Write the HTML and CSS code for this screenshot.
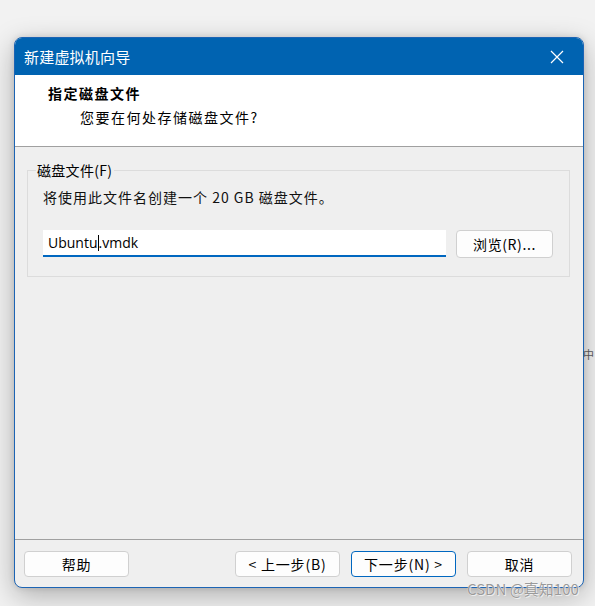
FILE: index.html
```html
<!DOCTYPE html>
<html>
<head>
<meta charset="utf-8">
<link rel="stylesheet" href="styles.css">
</head>
<body>
<div class="window">
  <div class="titlebar">
    <span class="title">新建虚拟机向导</span>
    <svg class="close" width="14" height="14" viewBox="0 0 14 14"><path d="M1 1 L13 13 M13 1 L1 13" stroke="#fff" stroke-width="1.2" fill="none"/></svg>
  </div>
  <div class="header">
    <div class="h-title">指定磁盘文件</div>
    <div class="h-sub">您要在何处存储磁盘文件?</div>
  </div>
  <div class="content">
    <fieldset class="group">
      <legend>磁盘文件(F)</legend>
      <div class="desc">将使用此文件名创建一个 20 GB 磁盘文件。</div>
      <div class="row">
        <div class="input">Ubuntu<span class="caret"></span>.vmdk</div>
        <div class="btn browse">浏览(R)...</div>
      </div>
    </fieldset>
  </div>
  <div class="footer">
    <div class="btn">帮助</div>
    <div class="spacer"></div>
    <div class="btn">&lt; 上一步(B)</div>
    <div class="btn primary">下一步(N) &gt;</div>
    <div class="btn">取消</div>
  </div>
</div>
<div class="ime">中</div>
<div class="watermark">CSDN @真知100</div>
</body>
</html>
```
FILE: styles.css
```css
html, body {
  margin: 0;
  padding: 0;
}
body {
  width: 595px;
  height: 606px;
  background: #f2f2f2;
  font-family: "Noto Sans CJK SC", "Noto Sans", sans-serif;
  font-size: 14px;
  color: #000;
  position: relative;
  overflow: hidden;
  padding-top: 37px;
  box-sizing: border-box;
}
.window {
  margin-left: 14px;
  width: 570px;
  height: 551px;
  box-sizing: border-box;
  border: 1px solid #1c64b4;
  border-radius: 8px;
  overflow: hidden;
  background: #efefef;
  display: flex;
  flex-direction: column;
  box-shadow: 0 8px 28px rgba(0,0,0,0.28), 0 0 6px rgba(0,0,0,0.12);
}
.titlebar {
  height: 37px;
  background: #0063b1;
  display: flex;
  align-items: center;
  padding: 0 19px 0 9px;
  flex: none;
}
.title {
  color: #fff;
  font-size: 15px;
  flex: 1;
  letter-spacing: 0.2px;
}
.close {
  display: block;
}
.header {
  height: 71px;
  background: #fff;
  border-bottom: 1px solid #a0a0a0;
  flex: none;
  box-sizing: content-box;
}
.h-title {
  font-weight: bold;
  font-size: 14px;
  letter-spacing: 1.5px;
  padding: 8px 0 0 33px;
  line-height: 20px;
}
.h-sub {
  font-size: 14px;
  letter-spacing: 1.5px;
  padding: 4px 0 0 65px;
  line-height: 20px;
}
.content {
  flex: 1;
  padding: 13px 13px 0 12px;
}
.group {
  margin: 0;
  border: 1px solid #dcdcdc;
  padding: 7px 16px 18px 15px;
  min-width: 0;
}
.group legend {
  padding: 0 2px 0 1px;
  margin-left: -7px;
  font-size: 14px;
  line-height: 20px;
  letter-spacing: 0.3px;
}
.desc {
  line-height: 20px;
  letter-spacing: 1px;
  color: #111;
}
.row {
  display: flex;
  align-items: flex-start;
  margin-top: 23px;
  gap: 10px;
}
.input {
  flex: 1;
  height: 27px;
  box-sizing: border-box;
  background: #fff;
  border-bottom: 2px solid #0067c0;
  padding-left: 5px;
  line-height: 25px;
  font-size: 14px;
  font-family: "Open Sans", "Noto Sans", sans-serif;
}
.caret {
  display: inline-block;
  width: 1px;
  height: 16px;
  background: #000;
  vertical-align: -3px;
}
.btn {
  width: 105px;
  height: 26px;
  box-sizing: border-box;
  border: 1px solid #d0d0d0;
  border-radius: 4px;
  background: #fdfdfd;
  display: flex;
  align-items: center;
  justify-content: center;
  font-size: 14px;
  letter-spacing: 0.8px;
  flex: none;
}
.browse {
  width: 97px;
  height: 28px;
  letter-spacing: 0.6px;
}
.footer {
  flex: none;
  height: 36px;
  border-top: 1px solid #a0a0a0;
  display: flex;
  align-items: flex-start;
  padding: 11px 11px 0 9px;
  gap: 11px;
  box-sizing: content-box;
}
.spacer {
  flex: 1;
}
.primary {
  border-color: #0067c0;
}
.ime {
  position: absolute;
  left: 583px;
  top: 346px;
  font-size: 11px;
  color: #555;
}
.watermark {
  position: absolute;
  left: 467px;
  top: 578px;
  font-size: 15px;
  color: #9a9a9a;
  font-family: "Noto Sans CJK SC", "Noto Sans", sans-serif;
  text-shadow: 0 0 1px #fff, 1px 1px 0 rgba(255,255,255,0.6);
}
```
